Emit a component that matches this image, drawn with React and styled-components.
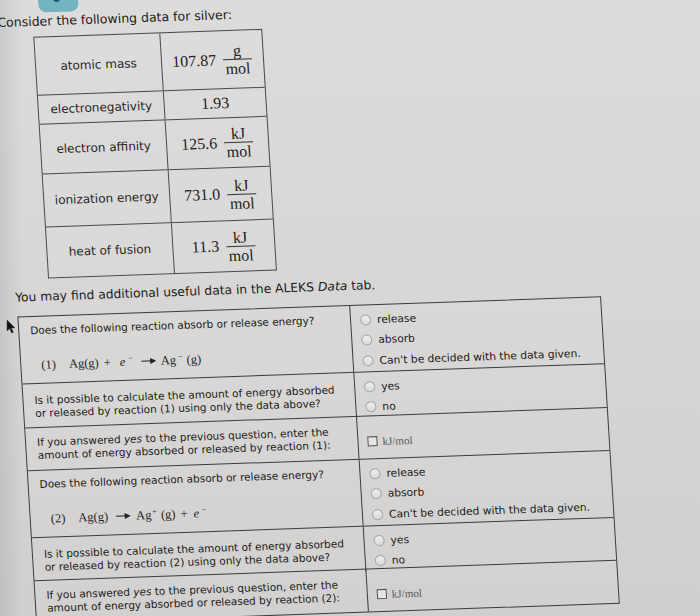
import React from "react";
import styled, { createGlobalStyle } from "styled-components";

const GlobalStyle = createGlobalStyle`
  html, body { margin: 0; padding: 0; }
  body {
    width: 700px;
    height: 616px;
    overflow: hidden;
    background:
      linear-gradient(90deg, rgba(0,0,0,0.08) 0px, rgba(0,0,0,0) 22px),
      linear-gradient(180deg, #dddcdb 0%, #d8d7d6 45%, #d0cfce 100%);
    font-family: "DejaVu Sans", Verdana, sans-serif;
    color: #222;
  }
  #root { width: 700px; height: 616px; position: relative; }
`;

const Sheet = styled.main`
  width: 640px;
  display: flex;
  flex-direction: column;
  align-items: flex-start;
  transform: rotate(-2deg) skewX(1.5deg);
  transform-origin: 0 0;
`;

const TopBar = styled.div`
  height: 14px;
  padding-left: 38px;
  display: flex;
`;

const Tab = styled.div`
  width: 40px;
  height: 14px;
  background: #74b4c0;
  border-radius: 0 0 8px 8px;
  display: flex;
  justify-content: center;
`;

const TabMark = styled.span`
  width: 7px;
  height: 4px;
  margin-left: -3px;
  background: #1e5b80;
  border-radius: 0 0 4px 4px;
`;

const Heading = styled.h1`
  margin: 0 0 0 -4px;
  font: 400 12.5px/18px "DejaVu Sans", Verdana, sans-serif;
  color: #202020;
`;

const DataTable = styled.div`
  margin: 6px 0 0 31px;
  width: 227px;
  display: flex;
  flex-direction: column;
  border: 1px solid #4a4a4a;
  background: rgba(255, 255, 255, 0.05);
`;

const DataRow = styled.div`
  display: grid;
  grid-template-columns: 126px 1fr;
  height: ${(p) => p.$h}px;
  & + & { border-top: 1px solid #4a4a4a; }
`;

const DataLabel = styled.div`
  display: flex;
  align-items: center;
  justify-content: center;
  border-right: 1px solid #4a4a4a;
  font-size: 12px;
  color: #262626;
`;

const DataValue = styled.div`
  display: flex;
  align-items: center;
  justify-content: center;
  gap: 6px;
  font-family: "Liberation Serif", "Times New Roman", serif;
  font-size: 16px;
  color: #1e1e1e;
`;

const Fraction = styled.span`
  display: inline-flex;
  flex-direction: column;
  align-items: center;
  padding: 0 1px;
  line-height: 17px;
`;

const FracPart = styled.span`
  padding: 0 2px;
`;

const FracBar = styled.span`
  align-self: stretch;
  height: 1px;
  background: #333;
`;

const Note = styled.p`
  margin: 9px 0 0 -3px;
  font: 400 12.3px/18px "DejaVu Sans", Verdana, sans-serif;
  color: #202020;
`;

const QTable = styled.div`
  margin: 10px 0 0 -2px;
  width: 582px;
  display: flex;
  flex-direction: column;
  border: 1px solid #3c3c3c;
  background: rgba(255, 255, 255, 0.05);
`;

const QRow = styled.div`
  display: grid;
  grid-template-columns: 332px 1fr;
  height: ${(p) => p.$h}px;
  & + & { border-top: 1px solid #3c3c3c; }
`;

const Prompt = styled.div`
  border-right: 1px solid #3c3c3c;
  padding: ${(p) => (p.$split ? "6px 0 0 11px" : "0 0 0 11px")};
  display: flex;
  flex-direction: column;
  justify-content: ${(p) => (p.$split ? "flex-start" : "center")};
  font-size: 10.5px;
  line-height: 13px;
  color: #1a1a1a;
`;

const Question = styled.div`
  line-height: 14px;
`;

const Equation = styled.div`
  margin: 20px 0 0 9px;
  display: flex;
  align-items: center;
  height: 16px;
  font-family: "Liberation Serif", "Times New Roman", serif;
  font-size: 12.5px;
  color: #1e1e1e;
  white-space: pre;
`;

const EqNum = styled.span`
  margin-right: 13px;
`;

const Italic = styled.i`
  font-style: italic;
`;

const Sup = styled.span`
  font-size: 8px;
  align-self: flex-start;
  margin: -2px ${(p) => p.$after}px 0 ${(p) => p.$before}px;
`;

const Plus = styled.span`
  margin: 0 ${(p) => p.$r}px 0 ${(p) => p.$l}px;
`;

const ArrowSvg = styled.svg`
  margin: 0 5px 0 8px;
  flex: none;
`;

const Answers = styled.div`
  padding-left: 9px;
  padding-top: ${(p) => (p.$center ? "8px" : "4px")};
  display: flex;
  flex-direction: column;
  justify-content: ${(p) => (p.$center ? "center" : "flex-start")};
`;

const Choice = styled.div`
  height: 20.5px;
  display: flex;
  align-items: center;
  gap: 6px;
  font-size: 10.7px;
  color: #181818;
`;

const Radio = styled.span`
  width: 11px;
  height: 11px;
  box-sizing: border-box;
  border-radius: 50%;
  border: 1px solid #a6a6a6;
  background: linear-gradient(#f0f0f0, #d9d9d9);
  flex: none;
`;

const UnitField = styled.div`
  display: flex;
  align-items: center;
  gap: 5px;
  font-family: "Liberation Serif", "Times New Roman", serif;
  font-size: 11px;
  color: #555;
`;

const Box = styled.span`
  width: 10px;
  height: 10px;
  box-sizing: border-box;
  border: 1px solid #505050;
  background: #e6e6e6;
  flex: none;
`;

const Cursor = styled.svg`
  position: absolute;
  left: 6px;
  top: 319px;
`;

const Arrow = () => (
  <ArrowSvg width="15" height="8" viewBox="0 0 15 8">
    <line x1="0" y1="4" x2="12" y2="4" stroke="#222" strokeWidth="1" />
    <path d="M9 1 L15 4 L9 7 Z" fill="#222" />
  </ArrowSvg>
);

const Frac = ({ top }) => (
  <Fraction>
    <FracPart>{top}</FracPart>
    <FracBar />
    <FracPart>mol</FracPart>
  </Fraction>
);

const dataRows = [
  { label: "atomic mass", value: "107.87", unit: "g", h: 57 },
  { label: "electronegativity", value: "1.93", h: 28 },
  { label: "electron affinity", value: "125.6", unit: "kJ", h: 49 },
  { label: "ionization energy", value: "731.0", unit: "kJ", h: 52 },
  { label: "heat of fusion", value: "11.3", unit: "kJ", h: 50 },
];

const Choices = ({ items }) => (
  <Answers>
    {items.map((t) => (
      <Choice key={t}>
        <Radio />
        {t}
      </Choice>
    ))}
  </Answers>
);

const Unit = () => (
  <Answers $center>
    <UnitField>
      <Box />
      kJ/mol
    </UnitField>
  </Answers>
);

const threeWay = ["release", "absorb", "Can't be decided with the data given."];
const twoWay = ["yes", "no"];

export default function App() {
  return (
    <>
      <GlobalStyle />
      <Sheet>
        <TopBar>
          <Tab>
            <TabMark />
          </Tab>
        </TopBar>
        <Heading>Consider the following data for silver:</Heading>
        <DataTable>
          {dataRows.map((r) => (
            <DataRow key={r.label} $h={r.h}>
              <DataLabel>{r.label}</DataLabel>
              <DataValue>
                <span>{r.value}</span>
                {r.unit && <Frac top={r.unit} />}
              </DataValue>
            </DataRow>
          ))}
        </DataTable>
        <Note>
          You may find additional useful data in the ALEKS <Italic>Data</Italic> tab.
        </Note>
        <QTable>
          <QRow $h={66}>
            <Prompt $split>
              <Question>Does the following reaction absorb or release energy?</Question>
              <Equation>
                <EqNum>(1)</EqNum>
                <span>Ag(g)</span>
                <Plus $l={5} $r={9}>+</Plus>
                <Italic>e</Italic>
                <Sup $before={3} $after={0}>−</Sup>
                <Arrow />
                <span>Ag</span>
                <Sup $before={2} $after={4}>−</Sup>
                <span>(g)</span>
              </Equation>
            </Prompt>
            <Choices items={threeWay} />
          </QRow>
          <QRow $h={43}>
            <Prompt>
              <div>Is it possible to calculate the amount of energy absorbed</div>
              <div>or released by reaction (1) using only the data above?</div>
            </Prompt>
            <Choices items={twoWay} />
          </QRow>
          <QRow $h={42}>
            <Prompt>
              <div>
                If you answered <Italic>yes</Italic> to the previous question, enter the
              </div>
              <div>amount of energy absorbed or released by reaction (1):</div>
            </Prompt>
            <Unit />
          </QRow>
          <QRow $h={66}>
            <Prompt $split>
              <Question>Does the following reaction absorb or release energy?</Question>
              <Equation>
                <EqNum>(2)</EqNum>
                <span>Ag(g)</span>
                <Arrow />
                <span>Ag</span>
                <Sup $before={1} $after={4}>+</Sup>
                <span>(g)</span>
                <Plus $l={5} $r={6}>+</Plus>
                <Italic>e</Italic>
                <Sup $before={3} $after={0}>−</Sup>
              </Equation>
            </Prompt>
            <Choices items={threeWay} />
          </QRow>
          <QRow $h={42}>
            <Prompt>
              <div>Is it possible to calculate the amount of energy absorbed</div>
              <div>or released by reaction (2) using only the data above?</div>
            </Prompt>
            <Choices items={twoWay} />
          </QRow>
          <QRow $h={42}>
            <Prompt>
              <div>
                If you answered <Italic>yes</Italic> to the previous question, enter the
              </div>
              <div>amount of energy absorbed or released by reaction (2):</div>
            </Prompt>
            <Unit />
          </QRow>
        </QTable>
      </Sheet>
      <Cursor width="10" height="15" viewBox="0 0 10 15">
        <path d="M1 1 L1 12 L3.6 9.6 L5.6 14 L7.4 13.2 L5.4 8.9 L9 8.9 Z" fill="#111" stroke="#444" strokeWidth="0.6" />
      </Cursor>
    </>
  );
}
